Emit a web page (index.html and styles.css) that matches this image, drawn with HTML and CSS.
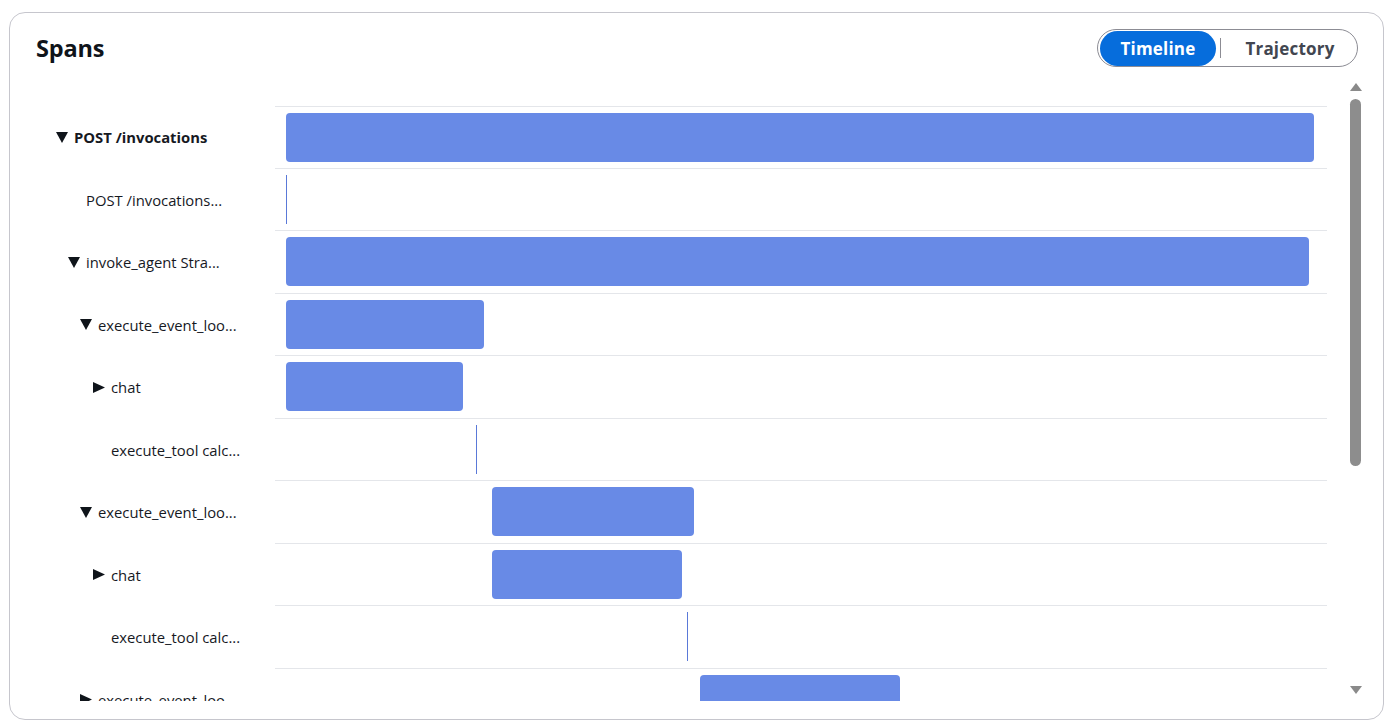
FILE: index.html
```html
<!DOCTYPE html>
<html lang="en">
<head>
<meta charset="utf-8">
<title>Spans</title>
<link rel="stylesheet" href="styles.css">
</head>
<body>
<div class="card">
  <div class="card-header">
    <h2 class="title">Spans</h2>
    <div class="segmented">
      <button class="seg seg-active">Timeline</button>
      <span class="seg-divider"></span>
      <button class="seg">Trajectory</button>
    </div>
  </div>
  <div class="card-body">
    <div class="viewport">
      <div class="rows">
        <div class="row">
          <div class="label lvl0"><svg class="caret" viewBox="0 0 12 11"><path d="M0 0H12L6 11Z"/></svg><span class="name root">POST /invocations</span></div>
          <div class="track first"><div class="bar" style="margin-left:11px;width:1028px"></div></div>
        </div>
        <div class="row">
          <div class="label lvl1"><span class="name">POST /invocations...</span></div>
          <div class="track"><div class="tick" style="margin-left:11px"></div></div>
        </div>
        <div class="row">
          <div class="label lvl1"><svg class="caret" viewBox="0 0 12 11"><path d="M0 0H12L6 11Z"/></svg><span class="name">invoke_agent Stra...</span></div>
          <div class="track"><div class="bar" style="margin-left:11px;width:1023px"></div></div>
        </div>
        <div class="row">
          <div class="label lvl2"><svg class="caret" viewBox="0 0 12 11"><path d="M0 0H12L6 11Z"/></svg><span class="name">execute_event_loo...</span></div>
          <div class="track"><div class="bar" style="margin-left:11px;width:198px"></div></div>
        </div>
        <div class="row">
          <div class="label lvl3"><svg class="caret" viewBox="0 0 12 11"><path d="M0 0L12 5.5L0 11Z"/></svg><span class="name">chat</span></div>
          <div class="track"><div class="bar" style="margin-left:11px;width:177px"></div></div>
        </div>
        <div class="row">
          <div class="label lvl3"><span class="name">execute_tool calc...</span></div>
          <div class="track"><div class="tick" style="margin-left:201px"></div></div>
        </div>
        <div class="row">
          <div class="label lvl2"><svg class="caret" viewBox="0 0 12 11"><path d="M0 0H12L6 11Z"/></svg><span class="name">execute_event_loo...</span></div>
          <div class="track"><div class="bar" style="margin-left:217px;width:202px"></div></div>
        </div>
        <div class="row">
          <div class="label lvl3"><svg class="caret" viewBox="0 0 12 11"><path d="M0 0L12 5.5L0 11Z"/></svg><span class="name">chat</span></div>
          <div class="track"><div class="bar" style="margin-left:217px;width:190px"></div></div>
        </div>
        <div class="row">
          <div class="label lvl3"><span class="name">execute_tool calc...</span></div>
          <div class="track"><div class="tick" style="margin-left:412px"></div></div>
        </div>
        <div class="row">
          <div class="label lvl2"><svg class="caret" viewBox="0 0 12 11"><path d="M0 0L12 5.5L0 11Z"/></svg><span class="name">execute_event_loo...</span></div>
          <div class="track"><div class="bar" style="margin-left:425px;width:200px"></div></div>
        </div>
      </div>
    </div>
    <div class="scrollbar">
      <svg class="sb-arrow" viewBox="0 0 12 8"><path d="M6 0L12 8H0Z"/></svg>
      <div class="sb-track"><div class="sb-thumb"></div></div>
      <svg class="sb-arrow" viewBox="0 0 12 8"><path d="M0 0H12L6 8Z"/></svg>
    </div>
  </div>
</div>
</body>
</html>
```

FILE: styles.css
```css
* { box-sizing: border-box; }

html, body {
  margin: 0;
  padding: 0;
  background: #ffffff;
}

body {
  font-family: "Open Sans", "Noto Sans", Arial, sans-serif;
  color: #16191f;
}

.card {
  margin: 12px 15px 7px 9px;
  height: 708px;
  border: 1px solid #c6c6cd;
  border-radius: 16px;
  padding: 16px 15px 18px 0;
  display: flex;
  flex-direction: column;
  background: #fff;
}

.card-header {
  display: flex;
  align-items: center;
  justify-content: space-between;
  height: 38px;
  padding-left: 26px;
  padding-right: 10px;
}

.title {
  margin: 0;
  font-size: 23.5px;
  font-weight: 700;
  line-height: 30px;
  color: #0f141a;
  letter-spacing: -0.2px;
}

.segmented {
  display: flex;
  align-items: center;
  height: 38px;
  width: 261px;
  border: 1px solid #8c8c94;
  border-radius: 19px;
  padding: 1px 2px;
}

.seg {
  font-family: inherit;
  font-size: 17px;
  font-weight: 700;
  border: none;
  background: transparent;
  color: #424650;
  height: 35px;
  border-radius: 18px;
  padding: 0;
  cursor: pointer;
  letter-spacing: 0.2px;
}

.seg-active {
  background: #066ddc;
  color: #ffffff;
  width: 116px;
}

.seg-divider {
  width: 1px;
  height: 20px;
  background: #8c8c94;
  margin-left: 4px;
}

.seg:last-child {
  flex: 1;
  text-align: center;
  padding-left: 4px;
}

.card-body {
  margin-top: 13px;
  height: 621px;
  display: flex;
}

.viewport {
  flex: 1;
  overflow: hidden;
  padding-top: 26px;
  padding-right: 16px;
}

.rows {
  display: flex;
  flex-direction: column;
}

.row {
  display: flex;
  height: 62.5px;
}

.label {
  width: 265px;
  flex: none;
  display: flex;
  align-items: center;
  font-size: 14.8px;
  white-space: nowrap;
}

.lvl0 { padding-left: 46px; }
.lvl1 { padding-left: 58px; }
.lvl2 { padding-left: 70px; }
.lvl3 { padding-left: 83px; }

.label .name { margin-left: 18px; }
.label .caret + .name { margin-left: 6px; }
.label.lvl0 .caret + .name { margin-left: 6px; }

.caret {
  width: 12px;
  height: 11px;
  flex: none;
  fill: #0f141a;
}

.name.root { font-weight: 700; }

.track {
  flex: 1;
  display: flex;
  align-items: center;
  border-bottom: 1px solid #e4e6ea;
}

.track.first {
  border-top: 1px solid #e4e6ea;
}

.bar {
  height: 49px;
  background: #688ae6;
  border-radius: 4px;
  flex: none;
}

.tick {
  width: 1px;
  height: 49px;
  background: #5a79d8;
  flex: none;
}

.scrollbar {
  width: 25px;
  flex: none;
  display: flex;
  flex-direction: column;
  align-items: center;
  padding: 3px 0 7px;
}

.sb-arrow {
  width: 12px;
  height: 8px;
  fill: #8a8a8a;
  flex: none;
}

.sb-track {
  flex: 1;
  width: 100%;
  display: flex;
  justify-content: center;
  padding-top: 8px;
}

.sb-thumb {
  width: 11px;
  height: 367px;
  border-radius: 6px;
  background: #8d8d8d;
}
```
